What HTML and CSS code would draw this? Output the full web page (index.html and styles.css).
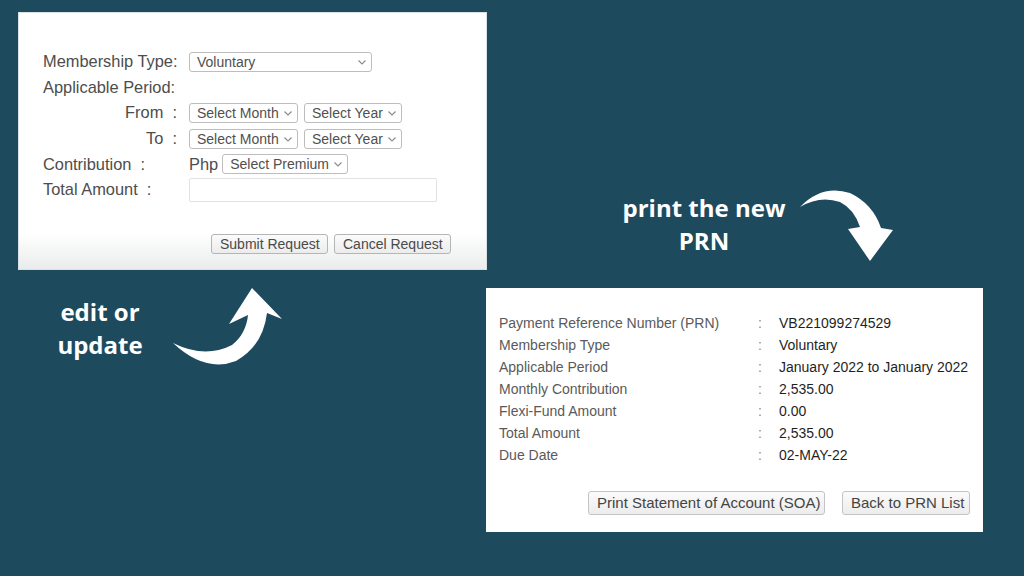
FILE: index.html
```html
<!DOCTYPE html>
<html lang="en">
<head>
<meta charset="utf-8">
<title>PRN update</title>
<link rel="stylesheet" href="styles.css">
</head>
<body>
<div class="slide">
  <div class="row top">
    <section class="panel form">
      <div class="grid">
        <div class="lbl">Membership Type:</div>
        <div class="val"><div class="sel w-type">Voluntary<svg class="chev" viewBox="0 0 8 5"><path d="M0.5 0.5 L4 4 L7.5 0.5"/></svg></div></div>
        <div class="lbl span">Applicable Period:</div>
        <div class="lbl right">From &nbsp;:</div>
        <div class="val"><div class="sel w-month">Select Month<svg class="chev" viewBox="0 0 8 5"><path d="M0.5 0.5 L4 4 L7.5 0.5"/></svg></div><div class="sel w-year">Select Year<svg class="chev" viewBox="0 0 8 5"><path d="M0.5 0.5 L4 4 L7.5 0.5"/></svg></div></div>
        <div class="lbl right">To &nbsp;:</div>
        <div class="val"><div class="sel w-month">Select Month<svg class="chev" viewBox="0 0 8 5"><path d="M0.5 0.5 L4 4 L7.5 0.5"/></svg></div><div class="sel w-year">Select Year<svg class="chev" viewBox="0 0 8 5"><path d="M0.5 0.5 L4 4 L7.5 0.5"/></svg></div></div>
        <div class="lbl">Contribution &nbsp;:</div>
        <div class="val"><span class="php">Php</span><div class="sel w-prem">Select Premium<svg class="chev" viewBox="0 0 8 5"><path d="M0.5 0.5 L4 4 L7.5 0.5"/></svg></div></div>
        <div class="lbl">Total Amount &nbsp;:</div>
        <div class="val"><div class="input"></div></div>
      </div>
      <div class="actions left-actions">
        <div class="btn">Submit Request</div>
        <div class="btn">Cancel Request</div>
      </div>
    </section>
    <div class="caption print">print the new<br>PRN</div>
    <svg class="arrow arrow-down" viewBox="794 184 100 80" width="100" height="80">
      <path d="M798,207 Q820,184 848,193 Q871,204 879,228 L891,230 L868,261 L846,229 L858,227 Q852,209 838,202 Q818,195 798,207 Z"/>
    </svg>
  </div>
  <div class="row bottom">
    <div class="caption edit">edit or<br>update</div>
    <svg class="arrow arrow-up" viewBox="170 284 120 90" width="120" height="90">
      <path d="M173,343 Q205,359 232,345 Q246,334 248,315 L229,324 L252,288 L282,319 L267,313 Q263,346 236,361 Q205,373 173,343 Z"/>
    </svg>
    <section class="panel prn">
      <div class="details">
        <div class="dl">Payment Reference Number (PRN)</div><div class="dc">:</div><div class="dv">VB221099274529</div>
        <div class="dl">Membership Type</div><div class="dc">:</div><div class="dv">Voluntary</div>
        <div class="dl">Applicable Period</div><div class="dc">:</div><div class="dv">January 2022 to January 2022</div>
        <div class="dl">Monthly Contribution</div><div class="dc">:</div><div class="dv">2,535.00</div>
        <div class="dl">Flexi-Fund Amount</div><div class="dc">:</div><div class="dv">0.00</div>
        <div class="dl">Total Amount</div><div class="dc">:</div><div class="dv">2,535.00</div>
        <div class="dl">Due Date</div><div class="dc">:</div><div class="dv">02-MAY-22</div>
      </div>
      <div class="actions right-actions">
        <div class="btn big w-soa">Print Statement of Account (SOA)</div>
        <div class="btn big w-back">Back to PRN List</div>
      </div>
    </section>
  </div>
</div>
</body>
</html>
```
FILE: styles.css
```css
* { box-sizing: border-box; }
html, body { margin: 0; padding: 0; }
body {
  width: 1024px;
  height: 576px;
  overflow: hidden;
  background: #1e4a5e;
  font-family: "Liberation Sans", Arial, sans-serif;
}
.slide { width: 1024px; height: 576px; }
.row { display: flex; align-items: flex-start; }
.top { height: 270px; padding: 12px 0 0 18px; }
.bottom { height: 306px; }

.panel { background: #fff; }

/* left form panel */
.form {
  width: 469px;
  height: 258px;
  padding: 36px 0 0 24px;
  background: linear-gradient(to bottom, #ffffff 0%, #ffffff 86%, #f3f4f4 94%, #eaecec 100%);
  border: 1px solid #d9e1e4;
}
.grid {
  display: grid;
  grid-template-columns: 146px auto;
  grid-auto-rows: 25.6px;
  align-items: center;
}
.lbl { font-size: 16.4px; color: #4d4d4d; white-space: nowrap; }
.lbl.span { grid-column: 1 / 3; }
.lbl.right { text-align: right; padding-right: 12px; }
.val { display: flex; align-items: center; gap: 6px; }
.sel {
  position: relative;
  height: 20px;
  border: 1px solid #bdbdbd;
  border-radius: 3px;
  background: #fff;
  font-size: 14px;
  color: #505050;
  padding-left: 7px;
  line-height: 19px;
  white-space: nowrap;
}
.chev {
  position: absolute;
  right: 5px;
  top: 7px;
  width: 8px;
  height: 5px;
  fill: none;
  stroke: #8a8a8a;
  stroke-width: 1.1;
}
.w-type { width: 183px; margin-top: 1px; }
.w-month { width: 109px; }
.w-year { width: 98px; }
.w-prem { width: 126px; }
.php { font-size: 16.4px; color: #4d4d4d; margin-right: -2px; }
.input {
  width: 248px;
  height: 24px;
  border: 1px solid #e2e2e2;
  border-radius: 2px;
  background: #fff;
}
.actions { display: flex; justify-content: flex-end; }
.left-actions { margin-top: 31px; padding-right: 35px; gap: 6px; }
.btn {
  height: 20px;
  padding: 0 8px;
  border: 1px solid #b5b5b5;
  border-radius: 3px;
  background: linear-gradient(to bottom, #fbfbfb, #ececec);
  font-size: 14px;
  color: #4a4a4a;
  line-height: 18px;
  white-space: nowrap;
  text-align: center;
}
.left-actions .btn { width: 117px; }

/* captions */
.caption {
  font-family: "Open Sans", "Noto Sans", sans-serif;
  font-weight: 700;
  font-size: 24px;
  line-height: 33px;
  color: #fff;
  text-align: center;
}
.print { width: 180px; margin: 179px 0 0 127px; }
.edit { width: 110px; margin: 25px 0 0 45px; }

.arrow { display: block; fill: #fff; flex: none; }
.arrow-down { margin: 172px 0 0 2px; }
.arrow-up { margin: 14px 0 0 15px; }

/* right PRN panel */
.prn {
  width: 497px;
  height: 244px;
  margin: 18px 0 0 196px;
  padding: 24px 0 0 13px;
}
.details {
  display: grid;
  grid-template-columns: 259px 21px auto;
  grid-auto-rows: 22px;
  align-items: center;
  font-size: 14px;
}
.dl { color: #5a5a5a; white-space: nowrap; }
.dc { color: #8c8c8c; }
.dv { color: #1f1f1f; white-space: nowrap; }
.right-actions { margin-top: 25px; padding-right: 13px; gap: 17px; }
.btn.big {
  height: 24px;
  font-size: 15px;
  line-height: 22px;
  color: #444;
  border-color: #c4c4c4;
}
.w-soa { width: 237px; }
.w-back { width: 128px; }
```
